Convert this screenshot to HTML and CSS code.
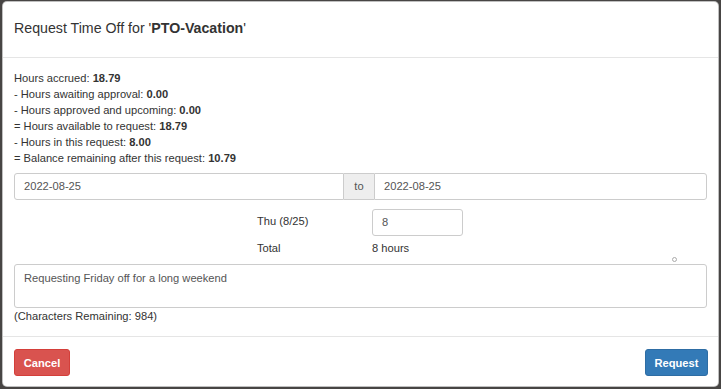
FILE: index.html
```html
<!DOCTYPE html>
<html>
<head>
<meta charset="utf-8">
<link rel="stylesheet" href="styles.css">
</head>
<body>
<div class="modal">
  <div class="modal-header">
    <h4 class="title">Request Time Off for '<b>PTO-Vacation</b>'</h4>
  </div>
  <div class="modal-body">
    <div class="summary">
      <div>Hours accrued: <b>18.79</b></div>
      <div>- Hours awaiting approval: <b>0.00</b></div>
      <div>- Hours approved and upcoming: <b>0.00</b></div>
      <div>= Hours available to request: <b>18.79</b></div>
      <div>- Hours in this request: <b>8.00</b></div>
      <div>= Balance remaining after this request: <b>10.79</b></div>
    </div>
    <div class="input-group">
      <div class="field field-left">2022-08-25</div>
      <div class="addon">to</div>
      <div class="field field-right">2022-08-25</div>
    </div>
    <div class="days">
      <div class="day-label">Thu (8/25)</div>
      <div class="day-input">8</div>
      <div class="total-label">Total</div>
      <div class="total-value">8 hours</div>
    </div>
    <div class="note-wrap">
      <span class="dot"></span>
      <div class="textarea">Requesting Friday off for a long weekend</div>
    </div>
    <div class="remaining">(Characters Remaining: 984)</div>
  </div>
  <div class="modal-footer">
    <button class="btn btn-danger">Cancel</button>
    <button class="btn btn-primary">Request</button>
  </div>
</div>
</body>
</html>
```

FILE: styles.css
```css
html, body {
  margin: 0;
  padding: 0;
}
body {
  background: #474544;
  font-family: "Liberation Sans", Arial, sans-serif;
  font-size: 11.15px;
  line-height: 16px;
  color: #333;
  width: 721px;
  height: 389px;
  overflow: hidden;
}
.modal {
  margin: 1px 0 0 2px;
  width: 717px;
  height: 386px;
  box-sizing: border-box;
  background: #fff;
  border: 1px solid rgba(0,0,0,0.25);
  border-radius: 5px;
  display: flex;
  flex-direction: column;
}
.modal-header {
  padding: 19px 11px 21px;
  border-bottom: 1px solid #e5e5e5;
}
.title {
  margin: 0;
  font-size: 14.2px;
  line-height: 15px;
  font-weight: normal;
  color: #333;
}
.title b {
  font-weight: bold;
}
.modal-body {
  padding: 12px 11px 12px;
  border-bottom: 1px solid #e5e5e5;
}
.summary b {
  font-weight: bold;
}
.input-group {
  display: flex;
  margin-top: 7px;
  height: 27px;
}
.field {
  box-sizing: border-box;
  border: 1px solid #ccc;
  padding: 0 9px;
  line-height: 25px;
  color: #555;
}
.field-left {
  width: 330px;
  border-radius: 3px 0 0 3px;
}
.addon {
  box-sizing: border-box;
  width: 30px;
  background: #eee;
  border-top: 1px solid #ccc;
  border-bottom: 1px solid #ccc;
  text-align: center;
  line-height: 25px;
  color: #555;
}
.field-right {
  flex: 1;
  border-radius: 0 3px 3px 0;
}
.days {
  display: grid;
  grid-template-columns: 243px 115px 91px;
  grid-template-rows: 27px 16px;
  row-gap: 4px;
  margin-top: 9px;
}
.day-label {
  grid-column: 2;
  line-height: 25px;
}
.day-input {
  grid-column: 3;
  box-sizing: border-box;
  border: 1px solid #ccc;
  border-radius: 3px;
  padding: 0 9px;
  line-height: 25px;
  color: #555;
}
.total-label {
  grid-column: 2;
}
.total-value {
  grid-column: 3;
}
.note-wrap {
  position: relative;
  margin-top: 8px;
}
.dot {
  position: absolute;
  top: -7px;
  left: 658px;
  width: 3px;
  height: 3px;
  border: 1px solid #aaa;
  border-radius: 50%;
}
.textarea {
  box-sizing: border-box;
  height: 44px;
  border: 1px solid #ccc;
  border-radius: 3px;
  padding: 5px 9px;
  color: #555;
}
.remaining {
  color: #333;
}
.modal-footer {
  padding: 12px 10px 12px 11px;
  display: flex;
  justify-content: space-between;
}
.btn {
  font-family: "Liberation Sans", Arial, sans-serif;
  font-size: 11.15px;
  font-weight: bold;
  color: #fff;
  height: 27px;
  padding: 0 8px;
  border-radius: 3px;
  border: 1px solid;
  margin: 0;
}
.btn-danger {
  width: 56px;
  background: #d9534f;
  border-color: #d43f3a;
}
.btn-primary {
  width: 63px;
  background: #337ab7;
  border-color: #2e6da4;
}
```
